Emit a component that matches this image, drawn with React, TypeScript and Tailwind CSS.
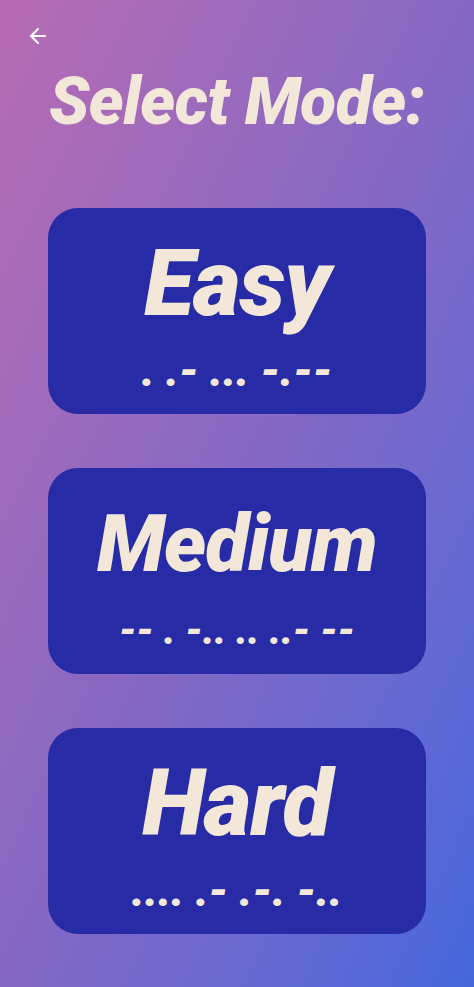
import { ArrowLeft } from "lucide-react";

const modes = [
  { name: "Easy", morse: ". .- ... -.--", size: "text-[92px]", morseSize: "text-[45px]" },
  { name: "Medium", morse: "-- . -.. .. ..- --", size: "text-[80px]", morseSize: "text-[40px]" },
  { name: "Hard", morse: ".... .- .-. -..", size: "text-[92px]", morseSize: "text-[45px]" },
];

export default function App() {
  return (
    <div
      className="min-h-[987px] w-full bg-gradient-to-br from-[#b86bb3] via-[#8568c4] to-[#4467dd] px-12 pb-10 text-[#f3e7d9]"
      style={{ fontFamily: "Roboto, sans-serif" }}
    >
      <div className="h-[72px] flex items-center -ml-[22px]">
        <ArrowLeft className="w-6 h-6 text-white" strokeWidth={2} />
      </div>
      <h1 className="text-center text-[66px] font-black italic leading-none tracking-[-0.5px] mt-[-3px]">
        Select Mode:
      </h1>
      <div className="mt-[73px] flex flex-col gap-[54px]">
        {modes.map((m) => (
          <button
            key={m.name}
            className="h-[206px] w-full rounded-[30px] bg-[#272ba6] flex flex-col items-center justify-start"
          >
            <span className={`h-[100px] mt-[26px] flex items-center ${m.size} font-black italic leading-none tracking-[-1px]`}>
              {m.name}
            </span>
            <span className={`h-[45px] mt-[14px] flex items-center ${m.morseSize} font-black italic leading-none`}>
              {m.morse}
            </span>
          </button>
        ))}
      </div>
    </div>
  );
}
